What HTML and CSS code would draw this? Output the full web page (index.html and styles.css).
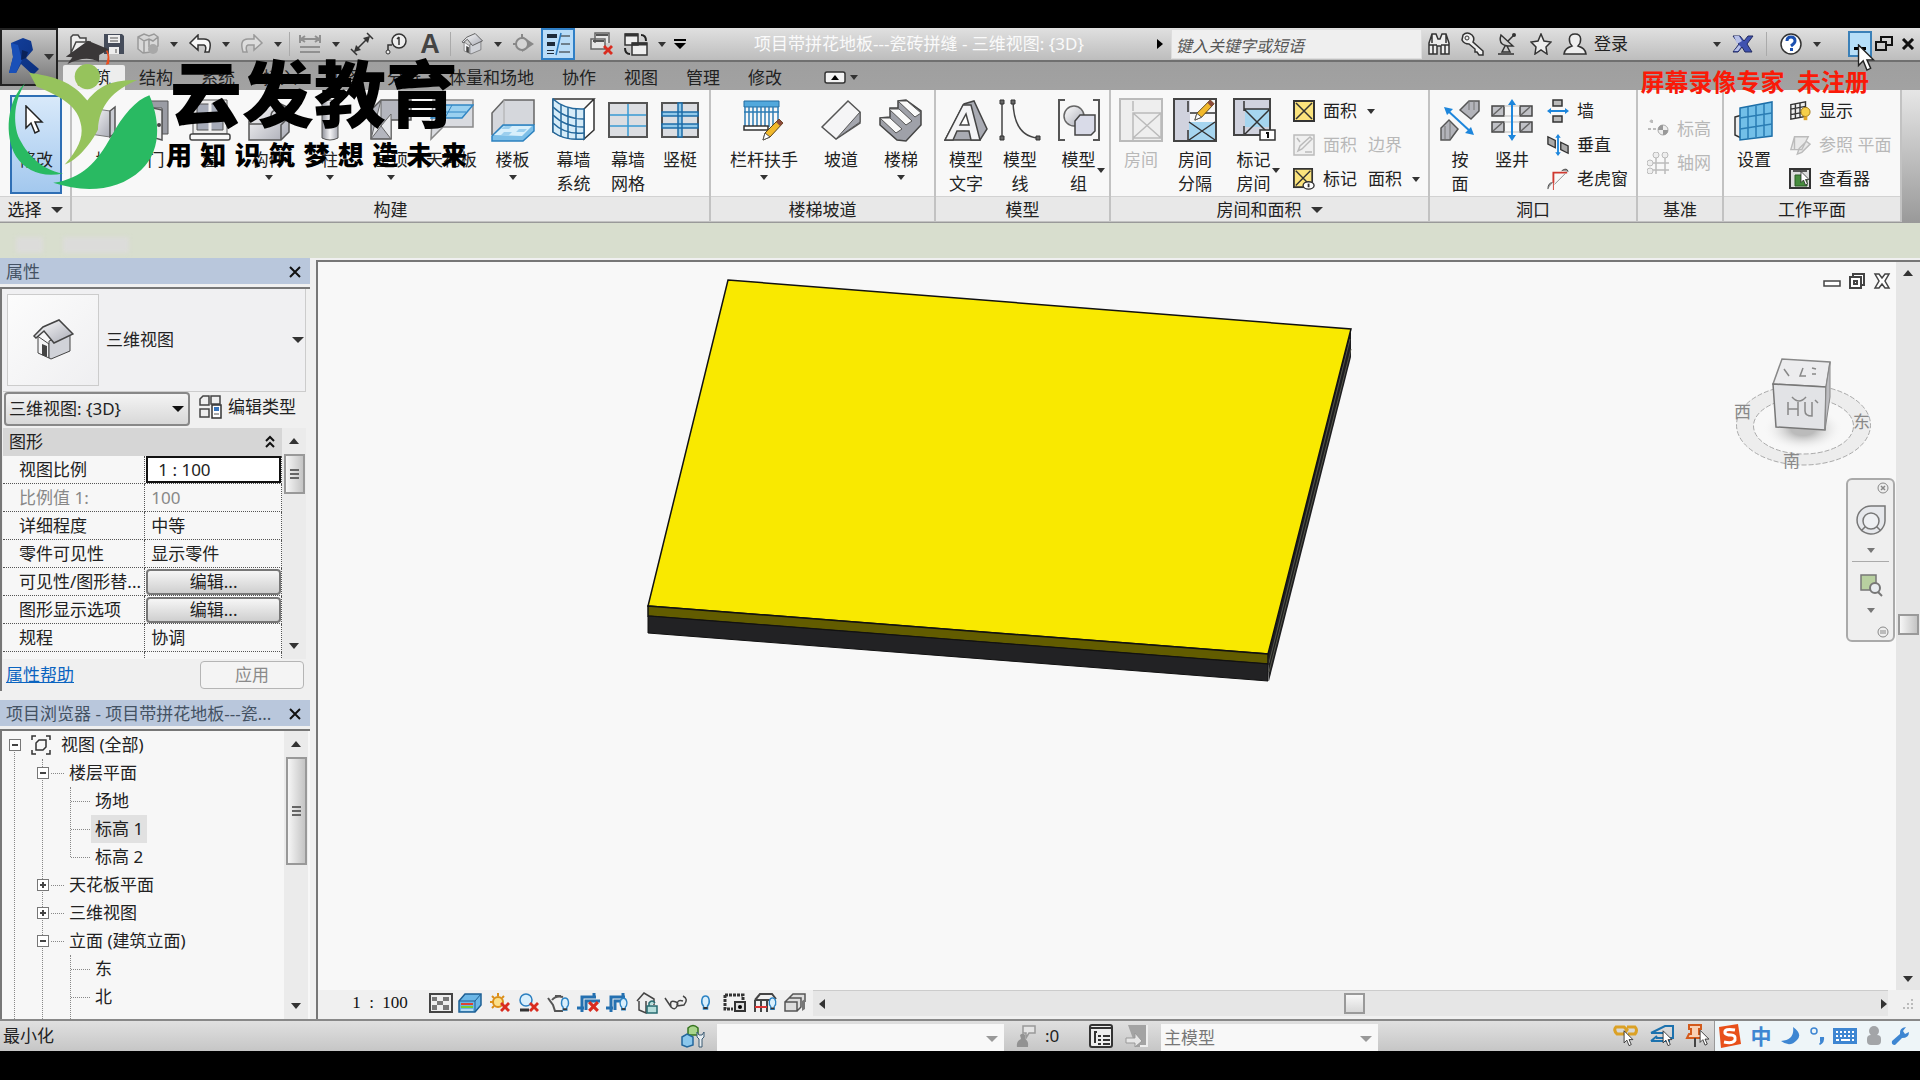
FILE: index.html
```html
<!DOCTYPE html>
<html lang="zh-CN">
<head>
<meta charset="utf-8">
<title>项目带拼花地板---瓷砖拼缝 - 三维视图: {3D}</title>
<link rel="stylesheet" href="styles.css">
</head>
<body>
<svg class="defs" aria-hidden="true">
  <defs>
    <linearGradient id="metal" x1="0" y1="0" x2="1" y2="1"><stop offset="0" stop-color="#fff"/><stop offset="1" stop-color="#a9abb5"/></linearGradient>
    <linearGradient id="steel" x1="0" y1="0" x2="1" y2="0"><stop offset="0" stop-color="#8e9099"/><stop offset=".5" stop-color="#f4f4f6"/><stop offset="1" stop-color="#a5a7b0"/></linearGradient>
    <linearGradient id="blue" x1="0" y1="0" x2="1" y2="1"><stop offset="0" stop-color="#d4ecf8"/><stop offset="1" stop-color="#6cb8e2"/></linearGradient>
    <linearGradient id="navy" x1="0" y1="0" x2="1" y2="1"><stop offset="0" stop-color="#123f9c"/><stop offset="1" stop-color="#0c2f7c"/></linearGradient>
    <radialGradient id="shade"><stop offset=".3" stop-color="#bbb"/><stop offset="1" stop-color="#f8f8f8" stop-opacity="0"/></radialGradient>
    <symbol id="pointer" viewBox="0 0 20 30"><path d="M2 1v22l5-5 4 10 4-2-4-9h7z" fill="#fff" stroke="#222" stroke-width="1.5"/></symbol>
    <symbol id="pencil" viewBox="0 0 24 24"><path d="M2 22l2-7L18 1l4 4L9 19z" fill="#f2b92c" stroke="#5c4317"/><path d="M2 22l2-7 5 4z" fill="#fff" stroke="#555"/><path d="M18 1l4 4-3 3-4-4z" fill="#8c4b3c"/></symbol>
    <symbol id="house" viewBox="0 0 40 42"><path d="M3 16L16 25V39L5 34V18z" fill="#f4f4f6" stroke="#444"/><path d="M16 39V22L37 14V32L18 40z" fill="#d0d2d8" stroke="#444"/><path d="M1 17L10 8 26 1 40 15 21 24 11 12 3 19z" fill="url(#metal)" stroke="#444" stroke-width="1.5"/><path d="M9 36V25l5 2v11z" fill="#444"/></symbol>
    <symbol id="area" viewBox="0 0 22 22"><path d="M1 1h20v20H1z" fill="#fbe37c" stroke="#333" stroke-width="2"/><path d="M3 3l16 16M19 3L3 19" stroke="#333" stroke-width="1.5"/></symbol>
    <symbol id="redx" viewBox="0 0 12 12"><path d="M1 3l2-2 3 3 3-3 2 2-3 3 3 3-2 2-3-3-3 3-2-2 3-3z" fill="#d92c20"/></symbol>
    <symbol id="bulb" viewBox="0 0 10 16"><path d="M3 11C0 8 1 1 5 1s5 7 2 10v3H3z" fill="#d9effc" stroke="#2b83c4" stroke-width="1.5"/><path d="M3 13h4" stroke="#333" stroke-width="2"/></symbol>
  </defs>
</svg>

<div class="app">
  <header class="header">
    <button class="app-menu" aria-label="应用程序菜单">
      <svg width="32" height="40" viewBox="0 0 32 40"><path d="M3 6L15 1l8 3 2 9-7 8 13 11-6 6L13 27 8 36H1l4-16z" fill="url(#navy)"/><path d="M3 6l7 2 4 15-6 13H1l4-16z" fill="#1950b8"/><path d="M14 13l6 2-2 6-5 2z" fill="#0a2258"/></svg>
      <i class="caret"></i>
    </button>
    <div class="titlebar">
      <button class="tool" aria-label="打开"><svg width="22" height="22" viewBox="0 0 22 22"><path d="M2 20V4l2-2h5l2 3h6v4M2 20L7 9h14l-5 11z" fill="#eee" stroke="#444" stroke-width="1.5"/></svg></button>
      <button class="tool" aria-label="保存"><svg width="22" height="22" viewBox="0 0 22 22"><path d="M1 1h18l2 2v18H1z" fill="#454c5a"/><path d="M5 2h12v8H5zM6 14h10v7H6z" fill="#eee"/><path d="M7 5h8M7 8h8M13 16v4" stroke="#555"/></svg></button>
      <button class="tool" aria-label="同步"><svg width="24" height="24" viewBox="0 0 24 24"><path d="M2 5l6-3 5 2 5-2 4 3v9l-7 6-8 1-5-4zM2 5l6 4 5-2 4 2 5-4M8 9v12M13 7v8" fill="#d8d8d8" stroke="#999" stroke-width="1.5"/><circle cx="17" cy="17" r="5" fill="#a8a8a8"/></svg></button>
      <button class="drop" aria-label="同步选项"><i class="caret"></i></button>
      <button class="tool" aria-label="放弃"><svg width="24" height="20" viewBox="0 0 24 20"><path d="M10 1L2 9l8 7v-5h6q3 1 1 7h4q4-13-5-13h-6z" fill="#f8f8f8" stroke="#333" stroke-width="1.5"/></svg></button>
      <button class="drop" aria-label="放弃列表"><i class="caret"></i></button>
      <button class="tool" aria-label="重做"><svg width="24" height="20" viewBox="0 0 24 20"><path d="M14 1l8 8-8 7v-5H8q-3 1-1 7H3Q-1 5 8 5h6z" fill="#ddd" stroke="#999" stroke-width="1.5"/></svg></button>
      <button class="drop" aria-label="重做列表"><i class="caret"></i></button>
      <i class="sep"></i>
      <button class="tool" aria-label="测量"><svg width="22" height="20" viewBox="0 0 22 20"><path d="M1 1v8M21 1v8M2 5h18M6 2L2 5l4 3M16 2l4 3-4 3M1 13h20M1 18h20" fill="none" stroke="#909090" stroke-width="2"/></svg></button>
      <button class="drop" aria-label="测量选项"><i class="caret"></i></button>
      <button class="tool" aria-label="对齐尺寸标注"><svg width="24" height="24" viewBox="0 0 24 24"><path d="M5 19L19 5M1 17l6 6M17 1l6 6" stroke="#333" stroke-width="1.5"/><path d="M4 20l2-7 5 5zM20 4l-7 2 5 5z" fill="#333"/></svg></button>
      <button class="tool" aria-label="按类别标记"><svg width="22" height="22" viewBox="0 0 22 22"><circle cx="14" cy="8" r="7" fill="#eee" stroke="#333" stroke-width="1.5"/><path d="M14 4v8M12 6l2-2M7 12H3v5" fill="none" stroke="#333" stroke-width="1.5"/><circle cx="3" cy="19" r="2" fill="#eee" stroke="#333"/></svg></button>
      <button class="tool letter" aria-label="文字">A</button>
      <i class="sep mid"></i>
      <button class="tool" aria-label="默认三维视图"><svg width="22" height="22"><use href="#house"/></svg></button>
      <button class="drop" aria-label="三维视图选项"><i class="caret"></i></button>
      <button class="tool" aria-label="剖面"><svg width="22" height="22" viewBox="0 0 22 22"><path d="M9 3l12 8-12 8z" fill="#888"/><circle cx="9" cy="11" r="6" fill="#d5d5d5" stroke="#888" stroke-width="2"/><path d="M0 11h3M9 1v4" stroke="#888" stroke-width="2"/></svg></button>
      <button class="tool toggled" aria-label="细线"><svg width="26" height="24" viewBox="0 0 26 24"><path d="M2 4h10M2 12h8M2 20h7" stroke="#1d2a3a" stroke-width="4"/><path d="M2 20h7" stroke="#bcdcf6" stroke-width="2"/><path d="M16 4h9M16 12h9M14 20h11" stroke="#222"/><path d="M16 1L11 23" stroke="#2878bd" stroke-width="1.5"/></svg></button>
      <button class="tool" aria-label="关闭隐藏窗口"><svg width="24" height="24" viewBox="0 0 24 24"><path d="M5 11V1h14v10M1 17V7h14v10z" fill="#e6e6e6" stroke="#666" stroke-width="1.5"/><path d="M6 3h12M3 9h11" stroke="#555" stroke-width="2"/><use href="#redx" x="12" y="12" width="12" height="12"/></svg></button>
      <button class="tool" aria-label="切换窗口"><svg width="24" height="24" viewBox="0 0 24 24"><path d="M1 2h13v11H1zM8 11h15v12H8z" fill="#eee" stroke="#333" stroke-width="1.5"/><path d="M1 3h13M8 12h15" stroke="#333" stroke-width="3"/><path d="M17 3q5 0 5 6M1 16q0 6 5 6" fill="none" stroke="#222" stroke-width="2"/></svg></button>
      <button class="drop" aria-label="窗口列表"><i class="caret"></i></button>
      <button class="drop" aria-label="自定义快速访问工具栏"><svg width="12" height="10" viewBox="0 0 12 10"><path d="M0 0h12v2H0zM0 4h12L6 10z"/></svg></button>
      <h1 class="doc-title">项目带拼花地板---瓷砖拼缝 - 三维视图: {3D}</h1>
      <svg class="search-arrow" width="6" height="10" viewBox="0 0 6 10"><path d="M0 0v10l6-5z"/></svg>
      <input class="search" type="text" placeholder="键入关键字或短语" aria-label="键入关键字或短语">
      <button class="tool" aria-label="搜索"><svg width="24" height="22" viewBox="0 0 24 22"><path d="M2 10L5 1h4l2 5h2l2-5h4l3 9v11h-8v-8h-4v8H2zM2 12h8M14 12h8M5 1v9M19 1v9M6 12v9M18 12v9" fill="#eee" stroke="#333" stroke-width="1.5"/></svg></button>
      <button class="tool" aria-label="速博中心"><svg width="24" height="24" viewBox="0 0 24 24"><path d="M2 3q4-4 9 0 3 3 1 7l10 9v4h-4l-2-3-2 0v-3l-6-5Q3 12 1 8z" fill="#eee" stroke="#333" stroke-width="1.5"/><circle cx="6" cy="6" r="2" fill="none" stroke="#333"/></svg></button>
      <button class="tool" aria-label="通讯中心"><svg width="22" height="24" viewBox="0 0 22 24"><path d="M5 3q-4 12 12 11zM12 9l6-6M9 14l-3 6h8l-3-6M2 22h16" fill="none" stroke="#333" stroke-width="1.5"/><circle cx="18" cy="3" r="2" fill="#333"/></svg></button>
      <button class="tool" aria-label="收藏夹"><svg width="22" height="22" viewBox="0 0 22 22"><path d="M11 1l3 7 7 1-5 5 1 7-6-4-6 4 1-7-5-5 7-1z" fill="#eee" stroke="#333" stroke-width="1.5"/></svg></button>
      <button class="login"><svg width="24" height="22" viewBox="0 0 24 22"><path d="M12 1c-8 0-6 9-3 12-5 2-7 3-8 8h22c-1-5-3-6-8-8 3-3 5-12-3-12z" fill="#eee" stroke="#333" stroke-width="1.5"/></svg><span>登录</span></button>
      <button class="drop" aria-label="登录选项"><i class="caret"></i></button>
      <button class="tool" aria-label="Exchange 应用程序"><svg width="22" height="18" viewBox="0 0 22 18"><path d="M1 1h7l4 5 4-5h5l-6 8 5 8h-7l-3-5-4 5H1l6-8z" fill="#3f52b0" stroke="#222b60"/><path d="M2 1h5l3 5-5 3zM9 12l-3 4H2l5-6z" fill="#b7c0e8"/></svg></button>
      <i class="sep wide"></i>
      <button class="tool" aria-label="帮助"><svg width="24" height="24" viewBox="0 0 24 24"><circle cx="12" cy="12" r="10" fill="#fff" stroke="#333" stroke-width="1.5"/><path d="M8 9q0-4 4-4t4 4q0 2-4 5" fill="none" stroke="#1b50b0" stroke-width="3"/><path d="M11 16h3v3h-3z" fill="#1b50b0"/></svg></button>
      <button class="drop" aria-label="帮助选项"><i class="caret"></i></button>
      <div class="window-buttons">
        <button class="hot" aria-label="最小化"><svg width="14" height="14" viewBox="0 0 14 14"><path d="M1 10h12v3H1z"/></svg></button>
        <button aria-label="还原"><svg width="18" height="16" viewBox="0 0 18 16"><path d="M6 5V1h11v8h-5M1 6h10v8H1z" fill="none" stroke="#111" stroke-width="2"/></svg></button>
        <button aria-label="关闭"><svg width="14" height="12" viewBox="0 0 14 12"><path d="M2 1l10 10M12 1L2 11" stroke="#111" stroke-width="3"/></svg></button>
      </div>
    </div>
    <nav class="tabs">
      <button class="tab active">建筑</button><button class="tab">结构</button><button class="tab">系统</button><button class="tab">插入</button><button class="tab">注释</button><button class="tab">分析</button><button class="tab">体量和场地</button><button class="tab">协作</button><button class="tab">视图</button><button class="tab">管理</button><button class="tab">修改</button>
      <button class="collapse" aria-label="最小化功能区"><svg width="22" height="13" viewBox="0 0 22 13"><rect x="1" y="1" width="20" height="11" rx="2" fill="#f3f3f3" stroke="#333" stroke-width="1.5"/><path d="M7 9l4-5 4 5z"/></svg><i class="caret"></i></button>
    </nav>
  </header>

  <section class="ribbon">
    <div class="panel p-select">
      <div class="panel-body"><button class="big modify"><svg width="44" height="44" viewBox="0 0 44 44"><use href="#pointer" x="10" y="7" width="20" height="30"/></svg><span>修改</span></button></div>
      <button class="panel-name">选择<i class="caret large"></i></button>
    </div>
    <div class="panel p-build">
      <div class="panel-body">
        <button class="big w52"><svg width="44" height="44" viewBox="0 0 44 44"><path d="M8 10l20 3v26L8 36z" fill="url(#metal)" stroke="#777"/><path d="M28 13l5-4v26l-5 4z" fill="#c9cbd2" stroke="#555" stroke-width="1.5"/></svg><span>墙</span></button>
        <button class="big w52"><svg width="44" height="44" viewBox="0 0 44 44"><path d="M10 3h24v33h-6V10H10z" fill="#9a9ca4" stroke="#555"/><path d="M10 8l18 4v30l-18-5z" fill="#eee" stroke="#555" stroke-width="1.5"/><circle cx="25" cy="27" r="2" fill="#444"/></svg><span>门</span></button>
        <button class="big w56"><svg width="44" height="44" viewBox="0 0 44 44"><path d="M5 2h34v34H5z" fill="#eee" stroke="#555"/><path d="M9 6h26v26H9z" fill="#a6abb8" stroke="#555"/><path d="M22 5v28M9 18h26" stroke="#f2f2f2" stroke-width="3"/><rect x="2" y="36" width="40" height="6" rx="2" fill="#f8f8f8" stroke="#444" stroke-width="1.5"/></svg><span>窗</span></button>
        <button class="big w61"><svg width="44" height="44" viewBox="0 0 44 44"><path d="M2 23L14 12l16-8 12 6v24l-8 8H2z" fill="url(#metal)" stroke="#555" stroke-width="1.5"/><path d="M2 26h17q5 0 5-8 0-6 6-6h10M34 42V27l8-8" fill="none" stroke="#555" stroke-width="1.5"/></svg><span>构件</span><i class="caret"></i></button>
        <button class="big w61"><svg width="44" height="44" viewBox="0 0 44 44"><path d="M14 4v36q8 4 16 0V4q-8-4-16 0z" fill="url(#steel)" stroke="#555"/></svg><span>柱</span><i class="caret"></i></button>
        <button class="big w61"><svg width="44" height="44" viewBox="0 0 44 44"><path d="M2 41V12L12 2h30v20H22v19z" fill="#b4b6be" stroke="#555" stroke-width="1.5"/><path d="M12 2v26L2 41zM12 28l10 13V16z" fill="#e6e7ea" stroke="#666"/></svg><span>屋顶</span><i class="caret"></i></button>
        <button class="big w61"><svg width="44" height="44" viewBox="0 0 44 44"><path d="M3 2h40v27H13L1 41z" fill="#d9dbe0" stroke="#888" stroke-width="1.5"/><path d="M1 20L13 7h30L32 20z" fill="#9ad0f0" stroke="#3186c4" stroke-width="1.5"/><path d="M13 7l-7 7h30M22 7l-7 13" fill="none" stroke="#3186c4"/></svg><span>天花板</span></button>
        <button class="big w61"><svg width="44" height="44" viewBox="0 0 44 44"><path d="M1 37V15L13 2h30v25" fill="#d5d7dc" stroke="#666" stroke-width="1.5"/><path d="M13 2v25" stroke="#aaa"/><path d="M1 38l11-11h31v6L32 43H1z" fill="#7dbfe8" stroke="#2c81be" stroke-width="1.5"/><path d="M3 37l10-9h28L31 38z" fill="#d8effb"/><path d="M14 28l7 0-3 3h-8zM28 31h8l-3 3h-8zM13 34h8l-3 3h-8z" fill="#9ccfee"/></svg><span>楼板</span><i class="caret"></i></button>
        <button class="big w61"><svg width="44" height="44" viewBox="0 0 44 44"><path d="M1 1h41L32 11v30l10-9V1M1 1v33q12 8 31 7" fill="#fff" stroke="#333" stroke-width="1.5"/><path d="M1 1q12 11 31 10v30Q13 43 1 34z" fill="#d6ecf8" stroke="#24689c" stroke-width="1.5"/><path d="M9 6v33M16 9v32M24 11v30M1 9q12 12 31 12M1 17q12 12 31 12M1 25q12 12 31 10" fill="none" stroke="#24689c" stroke-width="1.5"/></svg><span>幕墙<br>系统</span></button>
        <button class="big w48"><svg width="44" height="44" viewBox="0 0 44 44"><path d="M3 5h38v34H3z" fill="#dcdee2" stroke="#555" stroke-width="2"/><path d="M4 17h36M4 28h36M22 6v32" stroke="#399bd4" stroke-width="1.5"/></svg><span>幕墙<br>网格</span></button>
        <button class="big w56"><svg width="44" height="44" viewBox="0 0 44 44"><path d="M4 5h36v34H4z" fill="#dcdee2" stroke="#555" stroke-width="2"/><path d="M4 14h36v4H4zM4 26h36v4H4zM20 5h4v34h-4z" fill="#92c9ea" stroke="#1c6ca8" stroke-width="1.5"/></svg><span>竖梃</span></button>
      </div>
      <h2 class="panel-name">构建</h2>
    </div>
    <div class="panel p-stair">
      <div class="panel-body">
        <button class="big w94"><svg width="44" height="44" viewBox="0 0 44 44"><path d="M2 3h35v6H2z" fill="#52a8dc" stroke="#206a9f"/><path d="M3 9v20M7 9v20M11 9v20M15 9v20M19 9v20M23 9v20M27 9v20M31 9v20M36 9v20M2 14h35" stroke="#2c7cb5" stroke-width="1.5"/><path d="M2 28h24v4H2z" fill="#fff" stroke="#333" stroke-width="1.5"/><use href="#pencil" x="19" y="20" width="24" height="24"/></svg><span>栏杆扶手</span><i class="caret"></i></button>
        <button class="big w60"><svg width="44" height="44" viewBox="0 0 44 44"><path d="M3 29L29 3l12 11v11L17 41z" fill="#f5f5f6" stroke="#555" stroke-width="1.5"/><path d="M41 14L17 41l24-17z" fill="#a4a6ae" stroke="#555"/></svg><span>坡道</span></button>
        <button class="big w60"><svg width="44" height="44" viewBox="0 0 44 44"><path d="M1 20v7l17 15 9 1 15-16V13L27 2l-8 1v7h-8v9z" fill="#9fa1a9" stroke="#444" stroke-width="1.5"/><path d="M19 3h9l14 12-6 4zM10 11h10l13 12-6 4zM1 20h10l12 11-6 4z" fill="#fafafa" stroke="#555"/></svg><span>楼梯</span><i class="caret"></i></button>
      </div>
      <h2 class="panel-name">楼梯坡道</h2>
    </div>
    <div class="panel p-model">
      <div class="panel-body">
        <button class="big w52"><svg width="44" height="44" viewBox="0 0 44 44"><path d="M1 42L20 6l10-3 13 28-7 11z" fill="#a9abb3" stroke="#444" stroke-width="1.5"/><path d="M1 42L19 7h8l9 35h-9l-2-9H13l-4 9z" fill="#f4f4f6" stroke="#444" stroke-width="1.5"/><path d="M16 27l6-11 3 11z" fill="#fff" stroke="#444" stroke-width="1.5"/></svg><span>模型<br>文字</span></button>
        <button class="big w56"><svg width="44" height="44" viewBox="0 0 44 44"><path d="M4 4v36M15 4Q16 38 40 40" fill="none" stroke="#444" stroke-width="1.5"/><path d="M2 2h4v4H2zM2 38h4v4H2zM13 2h4v4h-4zM38 38h4v4h-4z" fill="#666" stroke="#333"/></svg><span>模型<br>线</span></button>
        <button class="big w61 side"><svg width="44" height="44" viewBox="0 0 44 44"><path d="M8 2H2v40h6M36 2h6v40h-6" fill="none" stroke="#555" stroke-width="2"/><circle cx="17" cy="18" r="10" fill="url(#metal)" stroke="#666" stroke-width="1.5"/><path d="M18 23l5-6h15v16l-4 4H18z" fill="#d9dbe8" stroke="#444" stroke-width="1.5"/></svg><span>模型<br>组</span><i class="caret"></i></button>
      </div>
      <h2 class="panel-name">模型</h2>
    </div>
    <div class="panel p-room">
      <div class="panel-body">
        <button class="big w52" disabled><svg width="44" height="44" viewBox="0 0 44 44"><path d="M1 1h42v42H1z" fill="#eee" stroke="#bbb" stroke-width="2"/><path d="M14 3v10M14 30v12M14 15h28v25H14zM14 15l28 25M42 15L14 40" fill="none" stroke="#bbb" stroke-width="1.5"/></svg><span>房间</span></button>
        <button class="big w56"><svg width="44" height="44" viewBox="0 0 44 44"><path d="M1 1h42v42H1z" fill="#d0d2de" stroke="#444" stroke-width="2"/><path d="M17 2h25v22H17z" fill="#f7f7f9"/><path d="M16 24h26v18H16z" fill="#a6d5ef"/><path d="M15 3v11M15 32v10M16 24l26 18M42 24L16 42M17 15h25" stroke="#333" stroke-width="1.5"/><use href="#pencil" x="20" y="1" width="23" height="23"/></svg><span>房间<br>分隔</span></button>
        <button class="big w61 side"><svg width="44" height="44" viewBox="0 0 44 44"><path d="M2 1h36v36H2z" fill="#d0d2de" stroke="#444" stroke-width="2"/><path d="M13 11h24v18H13z" fill="#a6d5ef"/><path d="M12 3v10M12 28v8M12 11h25M13 12l24 24M37 12L13 36" stroke="#333" stroke-width="1.5"/><path d="M28 32h15v10H28z" fill="#fff" stroke="#333" stroke-width="1.5"/><path d="M36 34v6M34 35h2" stroke="#111" stroke-width="2"/></svg><span>标记<br>房间</span><i class="caret"></i></button>
        <div class="stack">
          <button><svg width="22" height="22"><use href="#area"/></svg>面积<i class="caret"></i></button>
          <button disabled><svg width="22" height="22" viewBox="0 0 22 22"><path d="M1 1h20v20H1zM5 17l2-5L17 3l2 2L9 15zM4 4l3 4M12 18h7" fill="#f0f0f0" stroke="#bbb" stroke-width="1.5"/></svg>面积<span class="second">边界</span></button>
          <button><svg width="24" height="24" viewBox="0 0 24 24"><use href="#area" width="22" height="22"/><ellipse cx="17" cy="19" rx="6" ry="4" fill="#fff" stroke="#333" stroke-width="1.5"/><path d="M17 17v4" stroke="#333" stroke-width="2"/></svg>标记<span class="second">面积</span><i class="caret"></i></button>
        </div>
      </div>
      <button class="panel-name">房间和面积<i class="caret large"></i></button>
    </div>
    <div class="panel p-open">
      <div class="panel-body">
        <button class="big w52"><svg width="44" height="44" viewBox="0 0 44 44"><path d="M22 12l9-9h10v10l-8 8zM3 42V30l8-8 9 9-8 11z" fill="#b3b4ba" stroke="#555" stroke-width="1.5"/><path d="M8 11l26 24" stroke="#1d86dc" stroke-width="2"/><path d="M6 9l9 2-6 6zM36 37l-9-2 6-6z" fill="#1d86dc"/><path d="M31 3v9M36 3v9M7 28v13M12 24v17" stroke="#777"/></svg><span>按<br>面</span></button>
        <button class="big w52"><svg width="44" height="44" viewBox="0 0 44 44"><path d="M2 8h12v10H2zM30 8h12v10H30zM2 24h12v10H2zM30 24h12v10H30z" fill="#c0c1c6" stroke="#444" stroke-width="1.5"/><path d="M3 17l9-8M31 17l9-8M3 33l9-8M31 33l9-8" stroke="#666" stroke-width="1.5"/><path d="M14 8h16M14 18h16M14 24h16M14 34h16" stroke="#bbb"/><path d="M22 5v34" stroke="#1d86dc" stroke-width="2"/><path d="M22 1l4 6h-8zM22 43l4-6h-8z" fill="#1d86dc"/></svg><span>竖井</span></button>
        <div class="stack">
          <button><svg width="22" height="24" viewBox="0 0 22 24"><path d="M6 1h9v6H6zM6 17h9v6H6z" fill="#bbb" stroke="#333" stroke-width="1.5"/><path d="M0 12l4-3v2h14V9l4 3-4 3v-2H4v2z" fill="#1d86dc"/></svg>墙</button>
          <button><svg width="24" height="24" viewBox="0 0 24 24"><path d="M1 3l8 4v8l-8-4zM15 9l8 4v8l-8-4z" fill="#aaa" stroke="#333" stroke-width="1.5"/><path d="M12 0l3 4h-2v16h2l-3 4-3-4h2V4H9z" fill="#1d86dc"/></svg>垂直</button>
          <button><svg width="24" height="24" viewBox="0 0 24 24"><path d="M7 16V5h15" fill="none" stroke="#d03a30" stroke-width="2"/><path d="M7 24V5" stroke="#d03a30"/><path d="M8 18L20 6" stroke="#888"/><path d="M1 23q0-7 5-7M16 3q6-4 7 1" fill="#999" stroke="#444"/></svg>老虎窗</button>
        </div>
      </div>
      <h2 class="panel-name">洞口</h2>
    </div>
    <div class="panel p-datum">
      <div class="panel-body">
        <div class="stack centered">
          <button disabled><svg width="22" height="22" viewBox="0 0 22 22"><path d="M1 11h9M5 2v5M3 4l2-2" stroke="#bbb" stroke-width="2" stroke-dasharray="3 2"/><circle cx="16" cy="12" r="5" fill="#eee" stroke="#aaa"/><path d="M16 7v5h5q0 5-5 5v-5h-5q0-5 5-5z" fill="#999"/></svg>标高</button>
          <button disabled><svg width="22" height="22" viewBox="0 0 22 22"><path d="M9 6v16M18 6v16M6 11h16M6 18h16" stroke="#bbb" stroke-width="1.5"/><g fill="#eee" stroke="#bbb"><circle cx="9" cy="3" r="3"/><circle cx="18" cy="3" r="3"/><circle cx="3" cy="11" r="3"/><circle cx="3" cy="19" r="3"/></g></svg>轴网</button>
        </div>
      </div>
      <h2 class="panel-name">基准</h2>
    </div>
    <div class="panel p-plane">
      <div class="panel-body">
        <button class="big w52"><svg width="44" height="44" viewBox="0 0 44 44"><path d="M3 19l32-9v19L9 40l-6-3z" fill="#eee" stroke="#333" stroke-width="1.5"/><path d="M8 10l32-6v34L8 42z" fill="#72bfe8" stroke="#1d6fa8" stroke-width="1.5"/><path d="M16 9v32M24 8v31M32 6v32M8 20l32-5M8 31l32-5" stroke="#2a7db4" stroke-width="1.5"/></svg><span>设置</span></button>
        <div class="stack">
          <button><svg width="24" height="22" viewBox="0 0 24 22"><path d="M2 4l16-3v16L2 20zM7 3v16M12 2v16M2 9l16-3M2 15l16-3" fill="#eee" stroke="#333" stroke-width="1.5"/><circle cx="18" cy="12" r="5" fill="#f6cf4a" stroke="#9c7415"/><path d="M16 17h4v4h-4z" fill="#e0a528"/></svg>显示</button>
          <button disabled><svg width="24" height="22" viewBox="0 0 24 22"><path d="M6 2h15L14 16H2zM6 2v14M9 21l2-6 8-8 4 3-9 9z" fill="#e9e9e9" stroke="#bbb" stroke-width="1.5"/></svg>参照 平面</button>
          <button><svg width="22" height="22" viewBox="0 0 22 22"><path d="M1 1h20v19H1z" fill="#ddd" stroke="#333" stroke-width="2"/><path d="M4 3h14" stroke="#555" stroke-width="2"/><path d="M6 7h7v4h5v7H6z" fill="#468c3d" stroke="#2b5c25"/><use href="#pointer" x="11" y="3" width="10" height="15"/></svg>查看器</button>
        </div>
      </div>
      <h2 class="panel-name">工作平面</h2>
    </div>
  </section>

  <div class="options-bar"><i class="smudge short"></i><i class="smudge"></i></div>

  <main class="main">
    <aside class="side-panels">
      <section class="props">
        <h2 class="dock-title"><span>属性</span><button aria-label="关闭属性"><svg width="12" height="12" viewBox="0 0 12 12"><path d="M1 1l10 10M11 1L1 11" stroke="#111" stroke-width="2"/></svg></button></h2>
        <div class="props-body">
          <button class="type-picker"><span class="thumb"><svg width="42" height="42"><use href="#house"/></svg></span><span>三维视图</span><i class="caret large"></i></button>
          <div class="instance">
            <div class="combo"><select aria-label="视图实例"><option>三维视图: {3D}</option></select><i class="caret large"></i></div>
            <button class="edit-type"><svg width="24" height="24" viewBox="0 0 24 24"><path d="M1 4l3-3h6v9H1zM12 1h9v8h-9zM1 14h9v8H1z" fill="#eee" stroke="#444" stroke-width="1.5"/><path d="M13 10h9v13h-9z" fill="#fff" stroke="#333" stroke-width="1.5"/><path d="M15 12h5v4h-5z" fill="#3775bd"/><path d="M15 19h5" stroke="#555"/></svg>编辑类型</button>
          </div>
          <div class="scroll-region">
            <div class="table-clip">
            <table class="prop-table">
              <colgroup><col class="col-name"><col></colgroup>
              <thead><tr><th colspan="2"><span class="group">图形<svg width="10" height="14" viewBox="0 0 10 14"><path d="M1 6l4-4 4 4M1 12l4-4 4 4" fill="none" stroke="#111" stroke-width="2"/></svg></span></th></tr></thead>
              <tbody>
                <tr><th><label for="scale">视图比例</label></th><td class="flush"><input id="scale" type="text" value="1 : 100"></td></tr>
                <tr class="dim"><th>比例值 1:</th><td>100</td></tr>
                <tr><th>详细程度</th><td>中等</td></tr>
                <tr><th>零件可见性</th><td>显示零件</td></tr>
                <tr><th>可见性/图形替...</th><td class="flush"><button class="edit">编辑...</button></td></tr>
                <tr><th>图形显示选项</th><td class="flush"><button class="edit">编辑...</button></td></tr>
                <tr><th>规程</th><td>协调</td></tr>
                <tr><th></th><td></td></tr>
              </tbody>
            </table>
            </div>
            <div class="vbar"><i class="arrow up"></i><i class="thumb-v grip t-props"></i><i class="arrow down"></i></div>
          </div>
          <div class="props-foot"><a href="#help">属性帮助</a><button disabled>应用</button></div>
        </div>
      </section>
      <section class="browser">
        <h2 class="dock-title"><span>项目浏览器 - 项目带拼花地板---瓷...</span><button aria-label="关闭项目浏览器"><svg width="12" height="12" viewBox="0 0 12 12"><path d="M1 1l10 10M11 1L1 11" stroke="#111" stroke-width="2"/></svg></button></h2>
        <div class="browser-body">
          <ul class="tree">
            <li><div class="node root"><button class="exp" aria-label="折叠"></button><svg width="20" height="20" viewBox="0 0 20 20"><path d="M5 1H1v4M15 1h4v4M1 15v4h4M19 15v4h-4" fill="none" stroke="#333" stroke-width="1.5"/><path d="M5 8l3-3h7v7l-3 3H5z" fill="none" stroke="#333" stroke-width="1.5"/></svg>视图 (全部)</div>
              <ul>
                <li><div class="node"><button class="exp" aria-label="折叠"></button>楼层平面</div>
                  <ul><li><div class="node leaf">场地</div></li><li><div class="node leaf"><span class="current">标高 1</span></div></li><li><div class="node leaf">标高 2</div></li></ul>
                </li>
                <li><div class="node"><button class="exp plus" aria-label="展开"></button>天花板平面</div></li>
                <li><div class="node"><button class="exp plus" aria-label="展开"></button>三维视图</div></li>
                <li><div class="node"><button class="exp" aria-label="折叠"></button>立面 (建筑立面)</div>
                  <ul><li><div class="node leaf">东</div></li><li><div class="node leaf">北</div></li><li><div class="node leaf"></div></li></ul>
                </li>
              </ul>
            </li>
          </ul>
          <div class="vbar"><i class="arrow up"></i><i class="thumb-v grip t-tree"></i><i class="arrow down"></i></div>
        </div>
      </section>
    </aside>

    <section class="view">
      <div class="view-top">
        <div class="canvas">
          <svg class="scene" viewBox="0 0 1578 728">
            <path d="M1033 67v28L951 419l-1-27z" fill="#1e1e20"/>
            <path d="M1032 77L951 401M1033 87L951 410" stroke="#55564a" fill="none"/>
            <path d="M410 18L1033 67 950 392 330 344z" fill="#f9e900" stroke="#111" stroke-width="1.5"/>
            <path d="M330 344l620 48v10l-620-48z" fill="#625c00" stroke="#111" stroke-width="1.5"/>
            <path d="M330 354l620 48v17l-620-48z" fill="#222224" stroke="#111"/>
          </svg>
          <div class="doc-buttons">
            <button aria-label="最小化视图"><svg width="18" height="18" viewBox="0 0 18 18"><path d="M1 9h16v5H1z" fill="#fff" stroke="#444" stroke-width="1.5"/></svg></button>
            <button aria-label="还原视图"><svg width="18" height="18" viewBox="0 0 18 18"><path d="M5 5V2h11v11h-3M2 5h11v11H2zM6 9h3v3H6z" fill="#fff" stroke="#444" stroke-width="2"/></svg></button>
            <button aria-label="关闭视图"><svg width="18" height="18" viewBox="0 0 18 18"><path d="M2 2h4l3 4 3-4h4l-4 7 4 7h-4l-3-4-3 4H2l4-7z" fill="#fff" stroke="#444" stroke-width="1.5"/></svg></button>
          </div>
          <svg class="viewcube" width="144" height="120" viewBox="0 0 144 120">
            <path d="M72 31a67 40 0 1 0 1 0zM73 44a50 28 0 1 1-1 0z" fill="#ededed" fill-rule="evenodd" stroke="#aaa" stroke-dasharray="5 2"/>
            <ellipse cx="72" cy="75" rx="40" ry="22" fill="url(#shade)"/>
            <path d="M42 30L51 5l48 3-4 25z" fill="#ececee" stroke="#888" stroke-width="1.5"/>
            <path d="M42 30l53 3-1 43-49-3z" fill="#e2e3e6" stroke="#777" stroke-width="1.5"/>
            <path d="M95 33l4-25v35l-5 33z" fill="#bdbdc1" stroke="#888"/>
            <path d="M57 61V48m0 7h10m0-7v14M74 48v9q0 5 7 5V48M61 43q7 8 14 0M84 46l3 3M72 14l-3 8h6M53 15l5 7M81 14l4 1M81 20h4" fill="none" stroke="#888" stroke-width="1.5"/>
            <g class="compass"><text x="3" y="64">西</text><text x="122" y="74">东</text><text x="52" y="113">南</text></g>
          </svg>
          <div class="navbar">
            <button class="mini" aria-label="关闭导航栏"><svg width="12" height="12" viewBox="0 0 12 12"><circle cx="6" cy="6" r="5" fill="#eee" stroke="#888"/><path d="M4 4l4 4M8 4L4 8" stroke="#888" stroke-width="1.5"/></svg></button>
            <button aria-label="控制盘"><svg width="32" height="32" viewBox="0 0 32 32"><path d="M16 1h14v15a14 14 0 1 1-14-15zM6 26l5-5M26 26l-5-5" fill="#e6e8ec" stroke="#777" stroke-width="1.5"/><circle cx="16" cy="16" r="8" fill="#eef0f3" stroke="#777" stroke-width="1.5"/></svg></button>
            <i class="caret"></i>
            <i class="rule"></i>
            <button aria-label="区域放大"><svg width="24" height="24" viewBox="0 0 24 24"><path d="M2 2h15v15H2z" fill="#b8d0a0" stroke="#777" stroke-width="1.5"/><circle cx="16" cy="15" r="5" fill="#e8ecf0" stroke="#777" stroke-width="2"/><path d="M19 19l4 4" stroke="#777" stroke-width="2"/></svg></button>
            <i class="caret"></i>
            <button class="mini last" aria-label="自定义导航栏"><svg width="12" height="12" viewBox="0 0 12 12"><circle cx="6" cy="6" r="5" fill="#eee" stroke="#888"/><path d="M3 5h6M3 7h6" stroke="#888"/></svg></button>
          </div>
        </div>
        <div class="vbar wide"><i class="arrow up"></i><i class="thumb-v t-view"></i><i class="arrow down"></i></div>
      </div>
      <div class="view-foot">
        <button class="scale">1&nbsp; :&nbsp; 100</button>
        <div class="view-tools">
          <button aria-label="详细程度"><svg width="24" height="20" viewBox="0 0 24 20"><path d="M1 1h22v18H1z" fill="#eee" stroke="#444" stroke-width="2"/><path d="M3 4h5v4H3zM14 4h6v4h-6zM8 8h6v4H8zM3 12h5v5H3zM14 12h6v5h-6z" fill="#777"/></svg></button>
          <button aria-label="视觉样式"><svg width="24" height="20" viewBox="0 0 24 20"><path d="M1 8l6-7h16v11l-6 7H1z" fill="#6bb6e6" stroke="#1d5f94" stroke-width="1.5"/><path d="M1 8h16l6-7M17 8v11" fill="none" stroke="#1d5f94"/><path d="M3 11h12" stroke="#d43" stroke-width="2"/><path d="M3 14h12" stroke="#7c3" stroke-width="2"/><path d="M3 17h12" stroke="#fff"/></svg></button>
          <button aria-label="关闭日光路径"><svg width="22" height="20" viewBox="0 0 22 20"><circle cx="9" cy="9" r="5" fill="#fbe08a" stroke="#db8f18" stroke-width="2"/><path d="M9 0v3M1 9h3M3 3l2 2M15 3l-2 2M3 15l2-2" stroke="#db8f18" stroke-width="2"/><use href="#redx" x="10" y="8" width="12" height="12"/></svg></button>
          <button aria-label="关闭阴影"><svg width="22" height="20" viewBox="0 0 22 20"><circle cx="8" cy="7" r="6" fill="#d9effc" stroke="#2b7fc0" stroke-width="1.5"/><path d="M2 17h9" stroke="#333" stroke-width="3"/><use href="#redx" x="10" y="8" width="12" height="12"/></svg></button>
          <button aria-label="渲染对话框"><svg width="24" height="20" viewBox="0 0 24 20"><path d="M1 5l5 7 2 6h8M5 7q4-5 11-3M8 3h6" fill="none" stroke="#555" stroke-width="2"/><use href="#bulb" x="13" y="4" width="10" height="15"/></svg></button>
          <button aria-label="裁剪视图"><svg width="24" height="20" viewBox="0 0 24 20"><path d="M1 15h7M6 19V4h14M10 17V8h14M18 0v5" fill="none" stroke="#2470b0" stroke-width="3"/><use href="#redx" x="11" y="7" width="13" height="13"/></svg></button>
          <button aria-label="显示裁剪区域"><svg width="24" height="20" viewBox="0 0 24 20"><path d="M1 15h7M6 19V4h14M10 17V8h6M18 0v5" fill="none" stroke="#2470b0" stroke-width="3"/><use href="#bulb" x="14" y="4" width="9" height="15"/></svg></button>
          <button aria-label="锁定三维视图"><svg width="24" height="22" viewBox="0 0 24 22"><path d="M2 9l7-8 10 6v6M4 9v9l7 3V9" fill="#eee" stroke="#444" stroke-width="1.5"/><path d="M12 14h10v7H12zM14 14v-3q3-4 6 0" fill="#b6dedb" stroke="#276b70" stroke-width="1.5"/></svg></button>
          <button aria-label="临时隐藏/隔离"><svg width="24" height="20" viewBox="0 0 24 20"><path d="M1 5l6 9q4 4 6-1l7-1q5-6-1-9M7 14q-2-8 5-5 3 1 1 4M13 12q0-6 6-4" fill="none" stroke="#444" stroke-width="1.5"/></svg></button>
          <button aria-label="显示隐藏的图元"><svg width="11" height="16"><use href="#bulb"/></svg></button>
          <button aria-label="临时视图属性"><svg width="24" height="20" viewBox="0 0 24 20"><path d="M2 2h18v6M2 2v14h8" fill="none" stroke="#333" stroke-width="3" stroke-dasharray="3 1"/><path d="M12 9h10v9H12z" fill="#ddd" stroke="#333" stroke-width="2"/><circle cx="17" cy="14" r="2"/></svg></button>
          <button aria-label="分析模型"><svg width="24" height="20" viewBox="0 0 24 20"><path d="M2 7l5-6h12l4 5M2 7h18v4M2 7v12M8 7v12M14 7v12" fill="none" stroke="#444" stroke-width="2"/><path d="M2 14h12" stroke="#d33" stroke-width="2"/><use href="#bulb" x="15" y="4" width="9" height="14"/></svg></button>
          <button aria-label="位移集"><svg width="24" height="20" viewBox="0 0 24 20"><path d="M7 5l4-4h12v8M3 9h12v9H3zM3 9l4-4h12v9l-4 4" fill="#ddd" stroke="#555" stroke-width="1.5"/><path d="M20 8l3-2v10l-3 2z" fill="#777"/></svg></button>
        </div>
        <div class="hbar"><i class="arrow left"></i><i class="thumb-h"></i><i class="arrow right"></i></div>
        <svg class="grip-corner" width="14" height="14" viewBox="0 0 14 14"><path d="M1 11h2v2H1zM5 7h2v2H5zM5 11h2v2H5zM9 3h2v2H9zM9 7h2v2H9zM9 11h2v2H9z" fill="#bbb"/></svg>
      </div>
    </section>
  </main>

  <footer class="status">
    <span class="hint">最小化</span>
    <button class="status-icon" aria-label="工作集"><svg width="24" height="24" viewBox="0 0 24 24"><path d="M7 4q5-5 10 0v7H7z" fill="#a9d58c" stroke="#35741f" stroke-width="1.5"/><path d="M1 13l5-3 6 3v8l-6 2-5-2z" fill="#8bc7ec" stroke="#24679c" stroke-width="1.5"/><path d="M16 8v5l2 2v8h3v-8l2-2V8l-2 3h-3z" fill="#e8eef2" stroke="#3a5a72"/></svg></button>
    <div class="combo flat worksets"><select aria-label="活动工作集"><option></option></select><i class="caret large"></i></div>
    <span class="requests"><svg width="22" height="24" viewBox="0 0 22 24"><path d="M8 2h12v7h-6l-3 5V9H8z" fill="#e4e4e4" stroke="#999" stroke-width="1.5"/><path d="M2 23q-1-6 4-8l-1-4q3-3 5 0v4q4 2 3 8z" fill="#929292"/></svg>:0</span>
    <button class="status-icon" aria-label="设计选项"><svg width="24" height="24" viewBox="0 0 24 24"><rect x="1" y="1" width="22" height="22" rx="2" fill="#eee" stroke="#333" stroke-width="2"/><path d="M2 4h20" stroke="#333" stroke-width="2"/><path d="M5 8h3M9 12h3M9 16h3M9 20h3M14 12h7M14 16h7M14 20h7M6 9v10" stroke="#333" stroke-width="2"/></svg></button>
    <button class="status-icon" aria-label="活动选项"><svg width="24" height="24" viewBox="0 0 24 24"><path d="M3 1h19v22H11" fill="#a3a3a3"/><path d="M1 14h9v-5l7 8-7 6v-4H1z" fill="#e6e6e6" stroke="#999"/><path d="M22 1v21h-7" stroke="#eee" fill="none" stroke-width="2"/></svg></button>
    <div class="combo flat options"><select aria-label="设计选项"><option>主模型</option></select><i class="caret large"></i></div>
    <div class="select-tools">
      <button aria-label="选择链接"><svg width="26" height="24" viewBox="0 0 26 24"><path d="M3 3h8l3 3-3 4H4Q0 6 3 3zM14 3h8q3 3 0 7h-7" fill="none" stroke="#dba125" stroke-width="3"/><use href="#pointer" x="10" y="6" width="11" height="17"/></svg></button>
      <button aria-label="选择基线图元"><svg width="26" height="24" viewBox="0 0 26 24"><path d="M2 9l14-7h8v12H7M2 9h13M2 17h19M8 12l-6 5" fill="none" stroke="#1c72ae" stroke-width="2"/><use href="#pointer" x="13" y="6" width="11" height="17"/></svg></button>
      <button aria-label="选择锁定图元"><svg width="26" height="24" viewBox="0 0 26 24"><path d="M4 1h12v4h-2v5h3l2 4H2l2-4h2V5H4z" fill="#f8d0b4" stroke="#d35a1c" stroke-width="2"/><path d="M10 14v9" stroke="#444" stroke-width="2"/><use href="#pointer" x="14" y="5" width="11" height="18"/></svg></button>
    </div>
    <div class="ime">
      <button aria-label="搜狗输入法"><svg width="26" height="26" viewBox="0 0 26 26"><path d="M3 4l19-3 3 20-20 4z" fill="#e8501a"/><path d="M19 7Q8 5 9 10q1 2 6 2t4 5q-2 4-11 2" fill="none" stroke="#fff" stroke-width="3"/></svg></button>
      <button class="zh">中</button>
      <button aria-label="半角"><svg width="20" height="20" viewBox="0 0 20 20"><path d="M13 1q10 7 4 13-7 8-16 1 14-1 12-14z" fill="#3e86d2"/></svg></button>
      <button aria-label="中文标点"><svg width="16" height="20" viewBox="0 0 16 20"><circle cx="5" cy="5" r="3" fill="none" stroke="#3e86d2" stroke-width="1.5"/><path d="M11 11h4q1 5-4 8l-1-1q2-2 1-3z" fill="#3e86d2"/></svg></button>
      <button aria-label="软键盘"><svg width="24" height="18" viewBox="0 0 24 18"><path d="M0 1h24v16H0z" fill="#3e86d2"/><path d="M3 5h18M3 9h18" stroke="#fff" stroke-width="2" stroke-dasharray="2 2"/><path d="M3 13h3M8 13h9M19 13h2" stroke="#fff" stroke-width="2"/></svg></button>
      <button aria-label="用户"><svg width="16" height="20" viewBox="0 0 16 20"><circle cx="8" cy="5" r="5" fill="#a3a5a8"/><rect x="1" y="9" width="14" height="10" rx="4" fill="#a3a5a8"/></svg></button>
      <button aria-label="工具"><svg width="20" height="20" viewBox="0 0 20 20"><path d="M2 15l8-7q-1-6 6-7l-3 4 2 3 4-2q0 6-7 6l-7 7q-4 0-3-4z" fill="#3e86d2"/></svg></button>
    </div>
  </footer>
</div>

<div class="brand">
  <svg width="166" height="173" viewBox="0 0 500 520"><path d="M160 490C250 475 290 430 335 350 370 285 410 240 450 226c30 70 40 165-25 225-70 65-170 70-265 39z" fill="#29ba62"/><path d="M76 190C20 240 12 350 48 410c30 45 80 65 142 52-70-14-110-60-135-112C35 290 50 230 76 190z" fill="#29ba62"/><circle cx="263" cy="170" r="38" fill="#96c35c"/><path d="M88 158c70 10 130 25 175 84 40-50 80-62 150-62-70 30-115 75-118 150-20 40-60 90-100 105 40-45 55-80 50-115-8-60-60-90-135-120z" fill="#96c35c"/><path d="M198 110l67-48 64 26-30 17-1 20c-30-15-60-10-95 7l15-20z" fill="#3a3738"/><path d="M319 92q10 15 0 42l9-2q5-20-4-41z" fill="#ee4d1c"/></svg>
  <div class="brand-text"><strong>云发教育</strong><p><span>用</span><span>知</span><span>识</span><span>筑</span><span>梦</span><span>想</span><span>造</span><span>未</span><span>来</span></p></div>
</div>
<div class="recorder-mark">屏幕录像专家&nbsp; 未注册</div>
<svg class="mouse" width="20" height="28"><use href="#pointer"/></svg>
</body>
</html>
```
FILE: styles.css
```css
* { box-sizing: border-box; }
html, body { height: 100%; }
body {
  margin: 0;
  padding: 28px 0 29px;
  background: #000;
  color: #222;
  font: 17px/24px "Noto Sans", "Noto Sans CJK SC", sans-serif;
  overflow: hidden;
  position: relative;
}
button, input, select { font: inherit; color: inherit; margin: 0; }
button { background: none; border: 0; padding: 0; }
h1, h2, p, ul { margin: 0; padding: 0; font-size: 17px; font-weight: 400; }
ul { list-style: none; }
svg { display: block; flex: none; }
.defs { position: absolute; width: 0; height: 0; }

.caret {
  flex: none;
  width: 0;
  height: 0;
  border: 4px solid transparent;
  border-top: 5px solid #333;
  border-bottom: 0;
}
.caret.large { border-width: 6px 6px 0; }

.app { height: 100%; display: flex; flex-direction: column; background: #f0f0f0; }

/* Title bar and tabs */
.header {
  flex: none;
  display: grid;
  grid-template: 34px 28px / 58px 1fr;
  background: linear-gradient(#9b9b9b, #a2a2a2);
}
.app-menu {
  grid-row: 1 / 3;
  height: 58px;
  display: flex;
  align-items: center;
  gap: 4px;
  padding-left: 6px;
  border: 2px solid #222;
  background: linear-gradient(#c8c8c8, #777);
}
.app-menu .caret { border-width: 6px 5px 0; }
.titlebar {
  display: flex;
  align-items: center;
  min-width: 0;
  padding-left: 5px;
  background: linear-gradient(#e0e0e0, #bdbdbd);
  border-bottom: 2px solid #707070;
}
.tool, .drop { flex: none; display: grid; place-items: center; height: 32px; }
.tool { width: 34px; }
.drop { width: 18px; }
.letter { font: 700 27px/30px "Liberation Sans", sans-serif; color: #444; }
.toggled { background: #b9dcf8; border: 2px solid #2f7fc6; margin-right: 10px; }
.sep { flex: none; width: 1px; height: 24px; margin: 0 3px 0 2px; background: #aaa; }
.sep.mid { margin: 0 4px 0 3px; }
.sep.wide { margin: 0 7px 0 6px; }
.doc-title {
  flex: 1;
  min-width: 0;
  padding-right: 8px;
  text-align: center;
  white-space: nowrap;
  overflow: hidden;
  color: #fafafa;
}
.search-arrow { margin-right: 8px; }
.search {
  width: 251px;
  height: 30px;
  padding: 4px 4px 0;
  border: 1px solid #ddd;
  background: #efefef;
  font-size: 16px;
}
.search::placeholder { color: #555; font-style: italic; opacity: 1; }
.login { flex: none; width: 150px; height: 32px; padding-left: 5px; display: flex; align-items: center; gap: 7px; }
.window-buttons { display: flex; margin-left: 22px; }
.window-buttons button { width: 24px; height: 26px; display: grid; place-items: center; }
.window-buttons .hot { background: #b6def8; border: 2px solid #3a80b8; }

.tabs { display: flex; align-items: end; padding-left: 5px; }
.tab { flex: none; height: 25px; padding: 0 14px; }
.tab.active { background: #ededed; border-radius: 2px 2px 0 0; }
.collapse { display: flex; align-items: center; gap: 4px; height: 26px; margin-left: 28px; }

/* Ribbon */
.ribbon {
  flex: none;
  display: flex;
  height: 133px;
  padding-bottom: 1px;
  background: linear-gradient(#e6e6e6, #999);
}
.panel {
  flex: none;
  display: flex;
  flex-direction: column;
  background: #f8f8f8;
  border-right: 2px solid #c2c2c2;
  border-bottom: 1px solid #c2c2c2;
}
.p-select { width: 72px; }
.p-build { width: 639px; }
.p-stair { width: 225px; }
.p-model { width: 175px; }
.p-room { width: 319px; }
.p-open { width: 208px; }
.p-datum { width: 86px; }
.p-plane { width: 178px; }
.panel-body { flex: 1; display: flex; padding-left: 4px; }
.p-build .panel-body, .p-stair .panel-body { padding-left: 6px; }
.p-select .panel-body { padding: 5px 8px 2px 10px; }
.panel-name {
  height: 25px;
  display: flex;
  align-items: center;
  justify-content: center;
  gap: 9px;
  padding-top: 2px;
  background: #e8e8e8;
  border-top: 1px solid #d2d2d2;
}
.big {
  position: relative;
  flex: none;
  display: flex;
  flex-direction: column;
  align-items: center;
  padding-top: 8px;
  white-space: nowrap;
}
.big span { margin-top: 6px; }
.big .caret { margin-top: 3px; }
.big.side .caret { position: absolute; right: 4px; top: 78px; margin: 0; }
.big:disabled, .stack button:disabled { color: #b8b8b8; }
.w48 { width: 48px; }
.w52 { width: 52px; }
.w56 { width: 56px; }
.w60 { width: 60px; }
.w61 { width: 61px; }
.w94 { width: 94px; }
.modify { flex: 1; padding-top: 1px; border: 2px solid #2f6fb5; background: linear-gradient(#d8e9fa, #a3c8ee); }
.stack { display: flex; flex-direction: column; padding: 4px 0 0 9px; }
.stack.centered { padding: 22px 0 0 5px; }
.stack button { height: 34px; display: flex; align-items: center; gap: 8px; white-space: nowrap; }
.stack svg { width: 22px; }
.stack .second { margin-left: 3px; }
.stack .caret { margin-left: 2px; }

.options-bar { flex: none; height: 35px; display: flex; align-items: center; gap: 20px; padding: 8px 0 0 16px; background: #d8dece; }
.smudge { width: 66px; height: 16px; background: #dcdcda; filter: blur(2px); }
.smudge.short { width: 27px; }

/* Docked panels */
.main { flex: 1; min-height: 0; display: flex; }
.side-panels { flex: none; width: 310px; display: flex; flex-direction: column; gap: 9px; }
.dock-title {
  height: 26px;
  display: flex;
  align-items: center;
  justify-content: space-between;
  padding: 2px 9px 0 6px;
  margin-bottom: 3px;
  background: #b9c7dc;
  color: #445263;
  white-space: nowrap;
}
.props-body { border: 2px solid #777; border-width: 2px 0 0 2px; padding: 0 4px 0 1px; }
.type-picker {
  width: 100%;
  height: 103px;
  display: flex;
  align-items: center;
  gap: 7px;
  padding: 0 1px 0 4px;
  background: #f0f0f2;
  border: 1px solid #ccc;
  border-width: 0 1px 1px 0;
}
.type-picker .thumb { width: 92px; height: 92px; display: grid; place-items: center; border: 1px solid #ccc; background: linear-gradient(135deg, #fcfcfc, #efeff1); }
.type-picker .caret { margin-left: auto; }
.instance { display: flex; align-items: flex-start; gap: 9px; height: 36px; padding-left: 1px; }
.combo { position: relative; width: 186px; height: 34px; }
.combo select {
  appearance: none;
  width: 100%;
  height: 100%;
  padding: 0 20px 0 3px;
  border: 2px solid #888;
  border-radius: 4px;
  background: linear-gradient(#f4f4f4, #d8d8d8);
  opacity: 1;
}
.combo .caret { position: absolute; right: 6px; top: 14px; border-top-color: #111; pointer-events: none; }
.edit-type { display: flex; align-items: center; gap: 5px; height: 30px; }
.scroll-region { display: flex; height: 231px; }
.table-clip { flex: 1; overflow: hidden; }
.prop-table { width: 100%; table-layout: fixed; border-spacing: 0; background: #f7f7f7; }
.col-name { width: 51%; }
.prop-table th, .prop-table td { height: 28px; padding: 0; font-weight: 400; text-align: left; border-bottom: 1px dotted #555; border-right: 1px dotted #555; white-space: nowrap; }
.prop-table tbody th { padding-left: 16px; }
.prop-table td { padding-left: 6px; }
.prop-table thead th { border: 0; background: #d6d6d6; }
.group { display: flex; align-items: center; justify-content: space-between; padding: 0 7px 0 6px; }
.prop-table .flush { padding: 0 0 0 1px; }
.prop-table input { display: block; width: 100%; height: 27px; padding: 0 10px; border: 2px solid #111; background: #fff; }
.prop-table .edit { display: block; width: 100%; height: 26px; line-height: 20px; border: 2px solid #777; border-radius: 4px; background: linear-gradient(#f6f6f6, #cfcfcf); }
.dim { color: #888; }
.props-foot { display: flex; justify-content: space-between; align-items: center; height: 32px; padding: 0 2px 0 3px; }
.props-foot a { color: #0b64c0; }
.props-foot button { width: 104px; height: 28px; border: 1px solid #b5b5b5; border-radius: 4px; background: #f4f4f4; color: #8a8a8a; }

.vbar { flex: none; width: 24px; display: flex; flex-direction: column; align-items: center; padding: 10px 0; background: #ebebeb; }
.vbar.wide { padding: 8px 0; background: #e6e6e6; }
.arrow { flex: none; width: 0; height: 0; border: 5px solid transparent; }
.arrow.up { border-bottom: 6px solid #333; border-top: 0; }
.arrow.down { border-top: 6px solid #333; border-bottom: 0; margin-top: auto; }
.arrow.left { border-right: 6px solid #333; border-left: 0; }
.arrow.right { border-left: 6px solid #333; border-right: 0; }
.thumb-v { flex: none; width: 21px; border: 2px solid #999; background: linear-gradient(90deg, #f6f6f6, #c4c4c4); display: grid; place-items: center; }
.thumb-v.grip::after { content: ""; width: 9px; height: 11px; background: repeating-linear-gradient(#666 0 2px, transparent 2px 4px); }
.t-props { height: 40px; margin-top: 10px; }
.t-tree { height: 108px; margin-top: 10px; }
.t-view { height: 21px; margin-top: 32px; position: relative; top: 43%; }

.browser { flex: 1; min-height: 0; display: flex; flex-direction: column; }
.browser .dock-title { flex: none; }
.browser-body { flex: 1; min-height: 0; display: flex; overflow: hidden; padding-right: 2px; border: 2px solid #777; border-width: 2px 0 0 2px; background: #f7f7f7; }
.tree { flex: 1; overflow: hidden; padding-left: 7px; }
.tree > li { position: relative; }
.tree > li::before { content: ""; position: absolute; left: 5px; top: 14px; bottom: 0; border-left: 1px dotted #888; }
.tree ul { position: relative; padding-left: 28px; }
.tree ul::before { content: ""; position: absolute; left: 33px; top: 0; bottom: 14px; border-left: 1px dotted #888; }
.node { height: 28px; display: flex; align-items: center; gap: 2px; white-space: nowrap; }
.node.root { gap: 10px; }
.node:not(.root)::before { content: ""; width: 19px; border-top: 1px dotted #888; margin-left: 6px; }
.node:not(.root):not(.leaf)::before { width: 13px; margin: 0 3px 0 0; }
.node:not(.root) .exp { order: -1; }
.node.leaf { gap: 5px; }
.exp { position: relative; flex: none; width: 12px; height: 12px; border: 1px solid #777; background: #fff; }
.exp::before, .exp.plus::after { content: ""; position: absolute; left: 2px; top: 4px; width: 6px; height: 2px; background: #444; }
.exp.plus::after { left: 4px; top: 2px; width: 2px; height: 6px; }
.current { background: #e1e1e1; padding: 2px 4px; margin-left: -4px; }

/* Drawing area */
.view { flex: 1; min-width: 0; display: flex; flex-direction: column; margin: 2px 0 0 6px; border: 2px solid #777; border-width: 2px 0 0 2px; background: #f8f8f8; }
.view-top { flex: 1; min-height: 0; display: flex; }
.canvas { position: relative; flex: 1; min-width: 0; background: #f8f8f8; }
.scene { width: 100%; height: 100%; }
.doc-buttons { position: absolute; top: 10px; right: 5px; display: flex; gap: 7px; }
.viewcube { position: absolute; top: 92px; right: 21px; }
.compass text { font-size: 17px; fill: #888; }
.navbar {
  position: absolute;
  top: 216px;
  right: 1px;
  width: 49px;
  height: 164px;
  display: flex;
  flex-direction: column;
  align-items: center;
  gap: 11px;
  padding: 2px 4px;
  border: 2px solid #aaa;
  border-radius: 6px;
  background: #efefef;
}
.navbar .mini { align-self: flex-end; }
.navbar .last { margin-top: auto; }
.navbar .caret { border-top-color: #777; }
.navbar .rule { width: 100%; flex: none; height: 1px; background: #aaa; margin: -3px 0 0; }
.view-foot { flex: none; height: 29px; padding-bottom: 3px; display: flex; align-items: center; background: #f0f0f0; }
.scale { flex: none; width: 108px; padding-left: 16px; font-family: "Liberation Serif", serif; color: #111; }
.view-tools { flex: none; width: 383px; display: grid; grid-template-columns: repeat(13, 1fr); }
.view-tools button { display: grid; place-items: center; }
.hbar { flex: 1; height: 100%; display: flex; align-items: center; margin-left: 4px; padding: 0 1px 0 6px; background: #e6e6e6; border-top: 1px solid #ccc; }
.thumb-h { width: 21px; height: 21px; margin-left: calc(49% - 4px); border: 2px solid #999; background: linear-gradient(#f8f8f8, #d8d8d8); }
.hbar .right { margin-left: auto; }
.grip-corner { margin: 0 4px 0 14px; }

/* Status bar */
.status { flex: none; height: 32px; display: flex; align-items: center; border-top: 2px solid #888; background: linear-gradient(#e0e0e0, #c6c6c6); }
.hint { flex: none; width: 681px; padding-left: 3px; }
.status-icon { flex: none; width: 36px; }
.combo.flat { flex: none; align-self: flex-end; height: 27px; }
.combo.flat select { border: 0; border-radius: 0; background: #f8f8f8; color: #777; }
.combo.flat .caret { top: 12px; border-top-color: #999; }
.worksets.combo { width: 287px; }
.options.combo { width: 217px; }
.requests { flex: none; display: flex; align-items: center; gap: 8px; width: 85px; padding-left: 11px; }
.select-tools { display: flex; gap: 10px; margin: 0 3px 0 auto; }
.ime { flex: none; align-self: stretch; width: 206px; display: flex; align-items: center; justify-content: space-between; padding: 0 10px 0 1px; background: #eef5f8; border-left: 1px solid #999; }
.zh { color: #3e86d2; font-size: 21px; font-weight: 700; }

/* Watermarks and mouse pointer lying over the window */
.brand { position: absolute; left: 0; top: 20px; display: flex; color: #000; pointer-events: none; }
.brand-text { display: flex; flex-direction: column; width: 301px; padding-top: 37px; }
.brand-text strong { padding-left: 4px; font-size: 72px; line-height: 72px; font-weight: 900; white-space: nowrap; }
.brand-text p { display: flex; justify-content: space-between; padding-top: 8px; font-size: 26px; line-height: 36px; font-weight: 900; }
.recorder-mark { position: absolute; right: 51px; top: 66px; color: #fa1a08; font-size: 24px; line-height: 32px; font-weight: 700; pointer-events: none; }
.mouse { position: absolute; right: 44px; top: 44px; pointer-events: none; }
```
